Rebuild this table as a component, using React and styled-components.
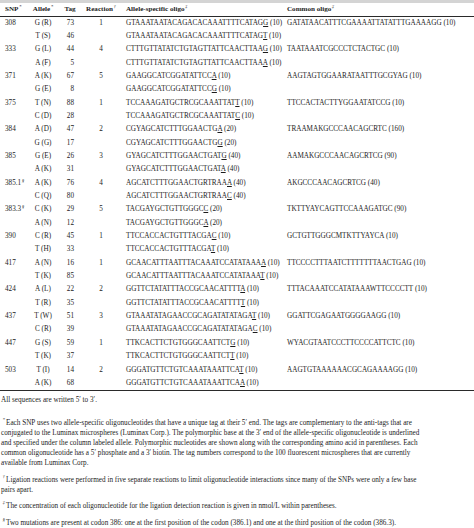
import React from "react";
import styled, { createGlobalStyle } from "styled-components";

const GlobalStyle = createGlobalStyle`
  html, body { margin: 0; padding: 0; background: #ffffff; }
  body {
    font-family: "Liberation Serif", "Times New Roman", serif;
    color: #1c1c1c;
  }
`;

const Page = styled.div`
  width: 474px;
  height: 528px;
  overflow: hidden;
  background: #fff;
`;

const Table = styled.div`
  border-top: 3px solid #d4d4d4;
  border-bottom: 1.5px solid #2a2a2a;
`;

const COLS = "30px 26px 28px 34px 169px 1fr";

const HeadRow = styled.div`
  display: grid;
  grid-template-columns: ${COLS};
  height: 12.5px;
  align-items: center;
  border-bottom: 1.5px solid #2a2a2a;
  font-weight: bold;
  font-size: 7.1px;
  white-space: nowrap;
`;

const Row = styled.div`
  display: grid;
  grid-template-columns: ${COLS};
  height: 13.35px;
  align-items: center;
  font-size: 7.2px;
  white-space: nowrap;
`;

const Cell = styled.div`
  text-align: ${(p) => p.$align || "left"};
  padding-left: ${(p) => p.$pl || 0}px;
  padding-right: ${(p) => p.$pr || 0}px;
  line-height: 1;
`;

const Sup = styled.sup`
  font-size: 5px;
  line-height: 0;
  vertical-align: 0;
  position: relative;
  top: -3px;
  margin-left: 0.5px;
  font-weight: normal;
  font-style: italic;
`;

const Base = styled.span`
  text-decoration: underline;
  text-decoration-thickness: 0.6px;
  text-underline-offset: 1px;
`;

const Notes = styled.div`
  padding: 4px 0 0 1px;
  font-size: 7.2px;
  line-height: 10px;
  white-space: nowrap;
`;

const Note = styled.p`
  margin: 0 0 ${(p) => p.$gap || 6.5}px 0;
`;

const Mark = styled.sup`
  font-size: 5px;
  line-height: 0;
  vertical-align: 0;
  position: relative;
  top: -4px;
  font-style: italic;
  margin: 0 1px 0 1.5px;
`;

const rows = [
  ["308", "", "G (R)", "73", "1", "GTAAATAATACAGACACAAATTTTCATAG", "G", "10", "GATATAACATTTCGAAAATTATATTTGAAAAGG (10)"],
  ["", "", "T (S)", "46", "", "GTAAATAATACAGACACAAATTTTCATAG", "T", "10", ""],
  ["333", "", "G (L)", "44", "4", "CTTTGTTATATCTGTAGTTATTCAACTTAA", "G", "10", "TAATAAATCGCCCTCTACTGC (10)"],
  ["", "", "A (F)", "5", "", "CTTTGTTATATCTGTAGTTATTCAACTTAA", "A", "10", ""],
  ["371", "", "A (K)", "67", "5", "GAAGGCATCGGATATTCC", "A", "10", "AAGTAGTGGAARATAATTTGCGYAG (10)"],
  ["", "", "G (E)", "8", "", "GAAGGCATCGGATATTCC", "G", "10", ""],
  ["375", "", "T (N)", "88", "1", "TCCAAAGATGCTRCGCAAATTAT", "T", "10", "TTCCACTACTTYGGAATATCCG (10)"],
  ["", "", "C (D)", "28", "", "TCCAAAGATGCTRCGCAAATTAT", "C", "10", ""],
  ["384", "", "A (D)", "47", "2", "CGYAGCATCTTTGGAACTG", "A", "20", "TRAAMAKGCCCAACAGCRTC (160)"],
  ["", "", "G (G)", "17", "", "CGYAGCATCTTTGGAACTG", "G", "20", ""],
  ["385", "", "G (E)", "26", "3", "GYAGCATCTTTGGAACTGAT", "G", "40", "AAMAKGCCCAACAGCRTCG (90)"],
  ["", "", "A (K)", "31", "", "GYAGCATCTTTGGAACTGAT", "A", "40", ""],
  ["385.1", "§", "A (K)", "76", "4", "AGCATCTTTGGAACTGRTRAA", "A", "40", "AKGCCCAACAGCRTCG (40)"],
  ["", "", "C (Q)", "80", "", "AGCATCTTTGGAACTGRTRAA", "C", "40", ""],
  ["383.3", "§", "C (K)", "29", "5", "TACGAYGCTGTTGGGC", "C", "20", "TKTTYAYCAGTTCCAAAGATGC (90)"],
  ["", "", "A (N)", "12", "", "TACGAYGCTGTTGGGC", "A", "20", ""],
  ["390", "", "C (R)", "45", "1", "TTCCACCACTGTTTACGA", "C", "10", "GCTGTTGGGCMTKTTYAYCA (10)"],
  ["", "", "T (H)", "33", "", "TTCCACCACTGTTTACGA", "T", "10", ""],
  ["417", "", "A (N)", "16", "1", "GCAACATTTAATTTACAAATCCATATAAA", "A", "10", "TTCCCCTTTAATCTTTTTTTAACTGAG (10)"],
  ["", "", "T (K)", "85", "", "GCAACATTTAATTTACAAATCCATATAAA", "T", "10", ""],
  ["424", "", "A (L)", "22", "2", "GGTTCTATATTTACCGCAACATTTT", "A", "10", "TTTACAAATCCATATAAAWTTCCCCTT (10)"],
  ["", "", "T (R)", "35", "", "GGTTCTATATTTACCGCAACATTTT", "T", "10", ""],
  ["437", "", "T (W)", "51", "3", "GTAAATATAGAACCGCAGATATATAGA", "T", "10", "GGATTCGAGAATGGGGAAGG (10)"],
  ["", "", "C (R)", "39", "", "GTAAATATAGAACCGCAGATATATAGA", "C", "10", ""],
  ["447", "", "G (S)", "59", "1", "TTKCACTTCTGTGGGCAATTCT", "G", "10", "WYACGTAATCCCTTCCCCATTCTC (10)"],
  ["", "", "T (K)", "37", "", "TTKCACTTCTGTGGGCAATTCT", "T", "10", ""],
  ["503", "", "T (I)", "14", "2", "GGGATGTTCTGTCAAATAAATTCA", "T", "10", "AAGTGTAAAAAACGCAGAAAAGG (10)"],
  ["", "", "A (K)", "68", "", "GGGATGTTCTGTCAAATAAATTCA", "A", "10", ""],
];

export default function App() {
  return (
    <Page>
      <GlobalStyle />
      <Table>
        <HeadRow>
          <Cell $pl={5}>SNP<Sup>*</Sup></Cell>
          <Cell $align="center">Allele<Sup>*</Sup></Cell>
          <Cell $align="center">Tag</Cell>
          <Cell $align="center">Reaction<Sup>†</Sup></Cell>
          <Cell $pl={8}>Allele-specific oligo<Sup>‡</Sup></Cell>
          <Cell>Common oligo<Sup>‡</Sup></Cell>
        </HeadRow>
        {rows.map((r, i) => (
          <Row key={i}>
            <Cell $pl={5}>
              {r[0]}
              {r[1] && <Sup>{r[1]}</Sup>}
            </Cell>
            <Cell $align="center">{r[2]}</Cell>
            <Cell $align="right" $pr={10}>{r[3]}</Cell>
            <Cell $align="center">{r[4]}</Cell>
            <Cell $pl={8}>
              {r[5]}
              <Base>{r[6]}</Base> ({r[7]})
            </Cell>
            <Cell>{r[8]}</Cell>
          </Row>
        ))}
      </Table>
      <Notes>
        <Note $gap={13}>All sequences are written 5′ to 3′.</Note>
        <Note>
          <Mark>*</Mark>Each SNP uses two allele-specific oligonucleotides that have a unique tag at their 5′ end. The tags are complementary to the anti-tags that are
          <br />
          conjugated to the Luminax microspheres (Luminax Corp.). The polymorphic base at the 3′ end of the allele-specific oligonucleotide is underlined
          <br />
          and specified under the column labeled allele. Polymorphic nucleotides are shown along with the corresponding amino acid in parentheses. Each
          <br />
          common oligonucleotide has a 5′ phosphate and a 3′ biotin. The tag numbers correspond to the 100 fluorescent microspheres that are currently
          <br />
          available from Luminax Corp.
        </Note>
        <Note>
          <Mark>†</Mark>Ligation reactions were performed in five separate reactions to limit oligonucleotide interactions since many of the SNPs were only a few base
          <br />
          pairs apart.
        </Note>
        <Note>
          <Mark>‡</Mark>The concentration of each oligonucleotide for the ligation detection reaction is given in nmol/L within parentheses.
        </Note>
        <Note>
          <Mark>§</Mark>Two mutations are present at codon 386: one at the first position of the codon (386.1) and one at the third position of the codon (386.3).
        </Note>
      </Notes>
    </Page>
  );
}
